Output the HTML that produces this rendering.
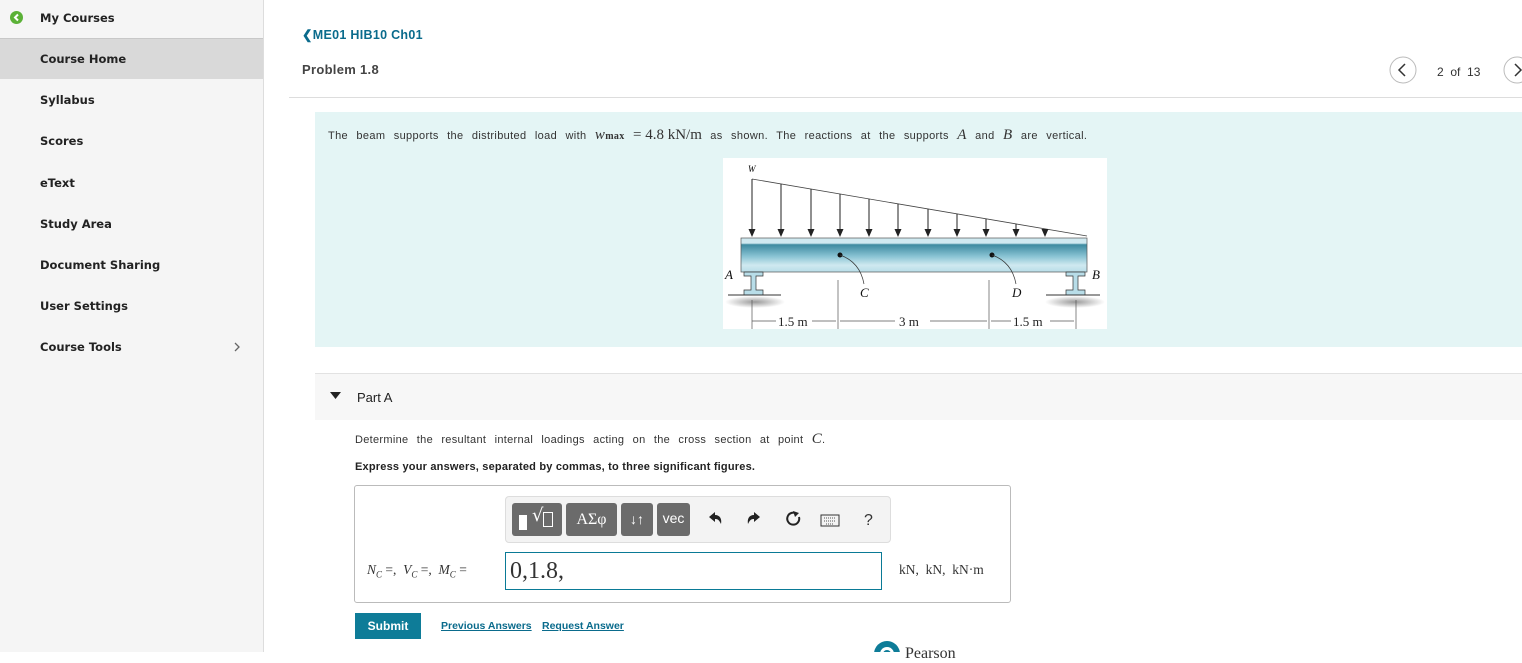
<!DOCTYPE html>
<html><head><meta charset="utf-8"><style>
*{margin:0;padding:0;box-sizing:border-box}
body{width:1522px;height:652px;overflow:hidden;background:#fff;font-family:"Liberation Sans",Arial,sans-serif;position:relative;color:#333}
.side{position:absolute;left:0;top:0;width:264px;height:652px;background:#f5f5f5;border-right:1px solid #ddd}
.side div{position:absolute;left:40px;font-weight:bold;color:#222;font-family:"DejaVu Sans","Liberation Sans",sans-serif;font-size:11.5px}
.abs{position:absolute}
.m{font-family:"Liberation Serif",serif;font-style:italic}
.lnk{color:#0a6b8c;text-decoration:underline;font-size:11px;font-weight:bold}
</style></head><body>
<div class="side">
 <svg class="abs" style="left:10px;top:11px" width="13" height="13"><circle cx="6.5" cy="6.5" r="6.5" fill="#5bb137"/><path d="M8 3.5 L5 6.5 L8 9.5" stroke="#fff" stroke-width="2" fill="none"/></svg>
 <div style="top:11px">My Courses</div>
 <div style="left:0;top:38px;width:263px;height:41px;background:#d9d9d9;border-top:1px solid #c8c8c8"></div>
 <div style="top:52px">Course Home</div>
 <div style="top:93px">Syllabus</div>
 <div style="top:134px">Scores</div>
 <div style="top:176px">eText</div>
 <div style="top:217px">Study Area</div>
 <div style="top:258px">Document Sharing</div>
 <div style="top:299px">User Settings</div>
 <div style="top:340px">Course Tools</div>
 <svg class="abs" style="left:233px;top:341px" width="8" height="12"><path d="M2 2 L6 6 L2 10" stroke="#666" stroke-width="1.3" fill="none"/></svg>
</div>
<div class="abs" style="left:302px;top:27px;font-size:12.5px;color:#0a6b8c;font-weight:bold;letter-spacing:0.3px">&#10094;ME01 HIB10 Ch01</div>
<div class="abs" style="left:302px;top:62px;font-size:13px;color:#444;font-weight:bold;letter-spacing:0.3px">Problem 1.8</div>
<svg class="abs" style="left:1389px;top:56px" width="28" height="28"><circle cx="14" cy="14" r="13" fill="#fff" stroke="#bbb"/><path d="M16 8 L10 14 L16 20" stroke="#333" stroke-width="1.5" fill="none"/></svg>
<div class="abs" style="left:1437px;top:65px;font-size:12px;color:#333">2 &nbsp;of &nbsp;13</div>
<svg class="abs" style="left:1503px;top:56px" width="28" height="28"><circle cx="14" cy="14" r="13" fill="#fff" stroke="#bbb"/><path d="M12 8 L18 14 L12 20" stroke="#333" stroke-width="1.5" fill="none"/></svg>
<div class="abs" style="left:289px;top:97px;width:1233px;height:1px;background:#ddd"></div>
<div class="abs" style="left:315px;top:112px;width:1207px;height:235px;background:#e4f5f5"></div>
<div class="abs" style="left:328px;top:127px;font-size:11px;color:#333;word-spacing:5px;letter-spacing:0.35px;white-space:nowrap">The beam supports the distributed load with <span class="m" style="font-size:15px">w</span><span style="font-family:'Liberation Serif',serif;font-size:10px;font-weight:bold">max</span> <span style="font-family:'Liberation Serif',serif;font-size:15px;letter-spacing:0;word-spacing:0">= 4.8 kN/m</span> as shown. The reactions at the supports <span class="m" style="font-size:15px">A</span> and <span class="m" style="font-size:15px">B</span> are vertical.</div>
<svg class="abs" style="left:723px;top:158px" width="384" height="171" viewBox="723 158 384 171">
 <defs><linearGradient id="g" x1="0" y1="0" x2="0" y2="1"><stop offset="0" stop-color="#cfe9f0"/><stop offset=".15" stop-color="#cfe9f0"/><stop offset=".2" stop-color="#3d8aa0"/><stop offset=".55" stop-color="#8cc5d5"/><stop offset=".8" stop-color="#cfe9f0"/><stop offset="1" stop-color="#b8dde8"/></linearGradient>
 <radialGradient id="sh"><stop offset="0" stop-color="#999"/><stop offset="1" stop-color="#fff"/></radialGradient></defs>
 <rect x="723" y="158" width="384" height="171" fill="#fff"/>
 <text x="748" y="172" font-family="Liberation Serif" font-style="italic" font-size="9">W</text>
 <line x1="752" y1="179" x2="1087" y2="236" stroke="#444" stroke-width=".8"/>
 <g stroke="#222" stroke-width="1">
 <path d="M752 179V236M781 184V236M811 189V236M840 194V236M869 199V236M898 204V236M928 209V236M957 214V236M986 219V236M1016 224V236M1045 229V236"/>
 </g>
 <g fill="#222"><path d="M748.5 229h7l-3.5 8zM777.5 229h7l-3.5 8zM807.5 229h7l-3.5 8zM836.5 229h7l-3.5 8zM865.5 229h7l-3.5 8zM894.5 229h7l-3.5 8zM924.5 229h7l-3.5 8zM953.5 229h7l-3.5 8zM982.5 229h7l-3.5 8zM1012.5 229h7l-3.5 8zM1041.5 229h7l-3.5 8z"/></g>
 <rect x="741" y="238" width="346" height="34" fill="url(#g)" stroke="#555" stroke-width=".7"/>
 <ellipse cx="755" cy="302" rx="30" ry="6" fill="url(#sh)"/><ellipse cx="1075" cy="302" rx="30" ry="6" fill="url(#sh)"/>
 <path d="M744 272h19v4h-7v14h7v5h-19v-5h7v-14h-7z" fill="#b8dde8" stroke="#333" stroke-width=".7"/>
 <path d="M1066 272h19v4h-7v14h7v5h-19v-5h7v-14h-7z" fill="#b8dde8" stroke="#333" stroke-width=".7"/>
 <line x1="728" y1="295" x2="781" y2="295" stroke="#333"/><line x1="1046" y1="295" x2="1100" y2="295" stroke="#333"/>
 <circle cx="840" cy="255" r="2.5" fill="#111"/><circle cx="992" cy="255" r="2.5" fill="#111"/>
 <path d="M840 255 Q860 262 864 284" stroke="#333" fill="none" stroke-width=".7"/>
 <path d="M992 255 Q1012 262 1016 284" stroke="#333" fill="none" stroke-width=".7"/>
 <g font-family="Liberation Serif" font-style="italic" font-size="13" fill="#111"><text x="725" y="279">A</text><text x="1092" y="279">B</text><text x="860" y="297">C</text><text x="1012" y="297">D</text></g>
 <g stroke="#555" stroke-width=".7"><path d="M752 300V329M838 280V329M989 280V329M1076 300V329M752 321H776M812 321H836M840 321H895M930 321H987M991 321H1011M1050 321H1074"/></g>
 <g font-family="Liberation Serif" font-size="13" fill="#222"><text x="778" y="326">1.5 m</text><text x="899" y="326">3 m</text><text x="1013" y="326">1.5 m</text></g>
</svg>
<div class="abs" style="left:315px;top:373px;width:1207px;height:47px;background:#f7f7f7;border-top:1px solid #e2e2e2"></div>
<svg class="abs" style="left:330px;top:392px" width="11" height="8"><path d="M0 0h11l-5.5 7z" fill="#222"/></svg>
<div class="abs" style="left:357px;top:390px;font-size:13px;color:#222">Part A</div>
<div class="abs" style="left:355px;top:431px;font-size:11px;color:#333;word-spacing:5px;letter-spacing:0.3px;white-space:nowrap">Determine the resultant internal loadings acting on the cross section at point <span class="m" style="font-size:15px">C</span>.</div>
<div class="abs" style="left:355px;top:461px;font-size:11px;color:#222;font-weight:bold;letter-spacing:0.2px">Express your answers, separated by commas, to three significant figures.</div>
<div class="abs" style="left:354px;top:485px;width:657px;height:118px;border:1px solid #bbb;border-radius:3px"></div>
<div class="abs" style="left:505px;top:496px;width:386px;height:47px;background:#f3f3f3;border:1px solid #ddd;border-radius:4px"></div>
<div class="abs" style="left:512px;top:503px;width:50px;height:33px;background:#6b6b6b;border-radius:3px"></div>
<div class="abs" style="left:519px;top:515px;width:8px;height:15px;background:#fff"></div>
<div class="abs" style="left:532px;top:505px;color:#fff;font-size:18px;font-family:'DejaVu Sans'">√</div>
<div class="abs" style="left:543px;top:512px;width:10px;height:15px;border:1px solid #fff"></div>
<div class="abs" style="left:566px;top:503px;width:51px;height:33px;background:#6b6b6b;border-radius:3px;color:#fff;font-family:'Liberation Serif';font-size:16px;text-align:center;line-height:33px">ΑΣφ</div>
<div class="abs" style="left:621px;top:503px;width:32px;height:33px;background:#6b6b6b;border-radius:3px;color:#fff;font-size:14px;text-align:center;line-height:33px">↓↑</div>
<div class="abs" style="left:657px;top:503px;width:33px;height:33px;background:#6b6b6b;border-radius:3px;color:#fff;font-size:14px;text-align:center;line-height:30px">vec</div>
<svg class="abs" style="left:706px;top:509px" width="170" height="20"><g fill="#222"><path d="M3 8 L9 3 V6 C14 6 16 10 15 15 C13 11 12 10 9 10 V13z"/><path d="M54 8 L48 3 V6 C43 6 41 10 42 15 C44 11 45 10 48 10 V13z"/></g><path d="M91 5 A6 6 0 1 0 93 8" stroke="#222" stroke-width="2" fill="none"/><path d="M87 2 L93 4 L89 8z" fill="#222"/><rect x="115" y="6" width="18" height="11" fill="none" stroke="#333"/><path d="M118 9h12M118 12h12M120 15h8" stroke="#555" stroke-dasharray="1 1"/><text x="158" y="16" font-size="16" fill="#333" font-family="Liberation Sans">?</text></svg>
<div class="abs" style="left:367px;top:562px;font-family:'Liberation Serif';font-size:13.5px;color:#333"><i>N<sub style="font-size:9px">C</sub></i> =, &nbsp;<i>V<sub style="font-size:9px">C</sub></i> =, &nbsp;<i>M<sub style="font-size:9px">C</sub></i> =</div>
<div class="abs" style="left:505px;top:552px;width:377px;height:38px;border:1px solid #0a7a96;font-family:'Liberation Serif';font-size:24px;line-height:36px;padding-left:4px;color:#333">0,1.8,</div>
<div class="abs" style="left:899px;top:562px;font-family:'Liberation Serif';font-size:13.5px;color:#333">kN, &nbsp;kN, &nbsp;kN·m</div>
<div class="abs" style="left:355px;top:613px;width:66px;height:26px;background:#0e7c98;color:#fff;font-size:12px;font-weight:bold;text-align:center;line-height:26px">Submit</div>
<div class="abs lnk" style="left:441px;top:620px;font-size:10.5px">Previous Answers</div>
<div class="abs lnk" style="left:542px;top:620px;font-size:10.5px">Request Answer</div>
<svg class="abs" style="left:873px;top:636px" width="40" height="16"><circle cx="14" cy="18" r="13" fill="#0e7c98"/><circle cx="14" cy="18" r="7" fill="#fff"/><circle cx="14" cy="18" r="4" fill="#0e7c98"/></svg>
<div class="abs" style="left:905px;top:645px;font-family:'Liberation Serif';font-size:16px;color:#333">Pearson</div>
</body></html>
